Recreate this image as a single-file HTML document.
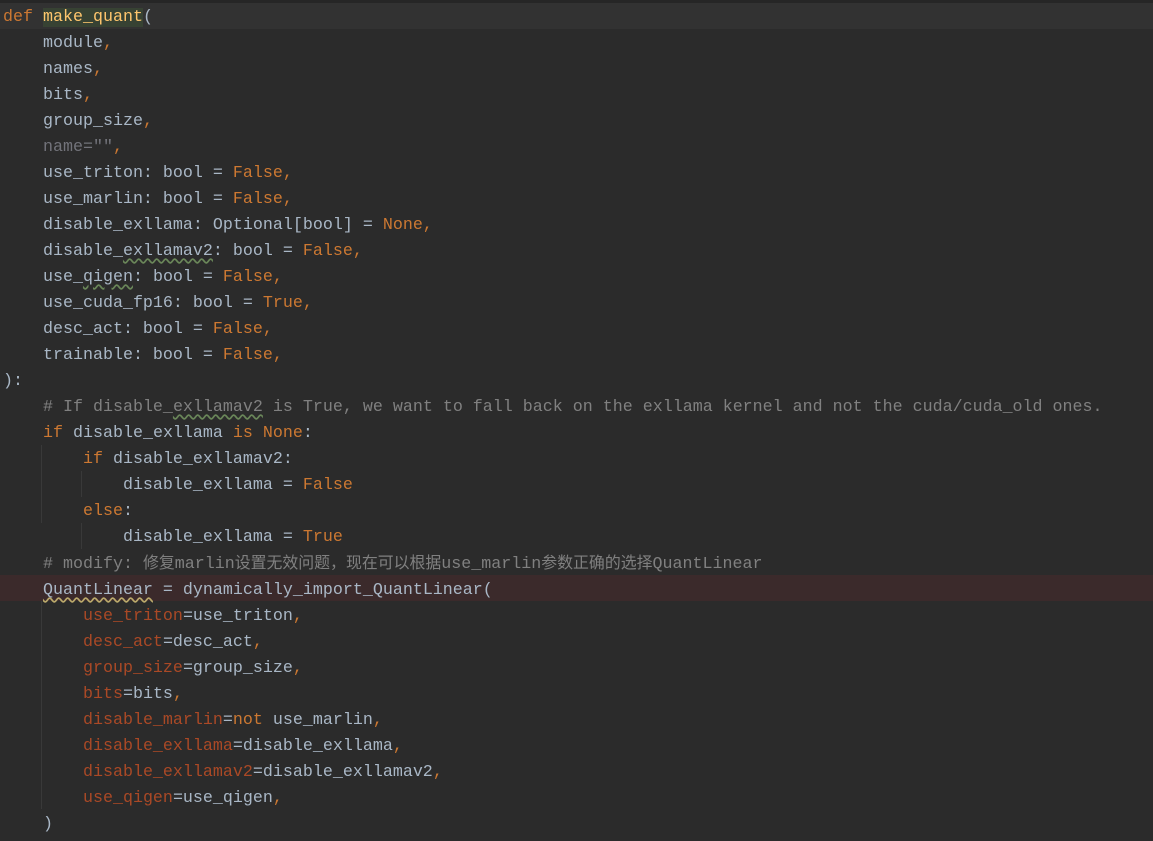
<!DOCTYPE html>
<html><head><meta charset="utf-8"><style>
body{margin:0;width:1153px;height:841px;background:#2b2b2b;overflow:hidden;position:relative}
.top{position:absolute;left:0;top:0;width:1153px;height:3px;background:#262626}
.cur{position:absolute;left:0;top:3px;width:1153px;height:26px;background:#323232}
.err{position:absolute;left:0;top:575px;width:1153px;height:26px;background:#3b2a2b}
.hl{background:#374233}
pre{position:absolute;left:3px;top:5px;margin:0;font-family:"Liberation Mono","Noto Sans CJK SC",monospace;font-size:16.67px;line-height:26px;color:#a9b7c6}
.k{color:#cc7832}.f{color:#ffc66d}.c{color:#808080}.p{color:#aa4926}.g{color:#72737a}
.z{font-size:15.9px}
.w{text-decoration:underline wavy #6a8759;text-underline-offset:3px}
.wy{text-decoration:underline wavy #bba96b;text-underline-offset:3px}
.ig{position:absolute;width:1px;background:#393939}
</style></head><body>
<div class="top"></div><div class="cur"></div><div class="err"></div>
<div class="ig" style="left:41px;top:445px;height:78px"></div>
<div class="ig" style="left:81px;top:471px;height:26px"></div>
<div class="ig" style="left:81px;top:523px;height:26px"></div>
<div class="ig" style="left:41px;top:601px;height:208px"></div>
<pre><span class="k">def</span> <span class="f hl">make_quant</span>(
    module<span class="k">,</span>
    names<span class="k">,</span>
    bits<span class="k">,</span>
    group_size<span class="k">,</span>
    <span class="g">name=""</span><span class="k">,</span>
    use_triton: bool = <span class="k">False,</span>
    use_marlin: bool = <span class="k">False,</span>
    disable_exllama: Optional[bool] = <span class="k">None,</span>
    disable_<span class="w">exllamav2</span>: bool = <span class="k">False,</span>
    use_<span class="w">qigen</span>: bool = <span class="k">False,</span>
    use_cuda_fp16: bool = <span class="k">True,</span>
    desc_act: bool = <span class="k">False,</span>
    trainable: bool = <span class="k">False,</span>
):
    <span class="c"># If disable_<span class="w">exllamav2</span> is True, we want to fall back on the exllama kernel and not the cuda/cuda_old ones.</span>
    <span class="k">if</span> disable_exllama <span class="k">is None</span>:
        <span class="k">if</span> disable_exllamav2:
            disable_exllama = <span class="k">False</span>
        <span class="k">else</span>:
            disable_exllama = <span class="k">True</span>
    <span class="c"># modify: <span class="z">修复</span>marlin<span class="z">设置无效问题，现在可以根据</span>use_marlin<span class="z">参数正确的选择</span>QuantLinear</span>
    <span class="wy">QuantLinear</span> = dynamically_import_QuantLinear(
        <span class="p">use_triton</span>=use_triton<span class="k">,</span>
        <span class="p">desc_act</span>=desc_act<span class="k">,</span>
        <span class="p">group_size</span>=group_size<span class="k">,</span>
        <span class="p">bits</span>=bits<span class="k">,</span>
        <span class="p">disable_marlin</span>=<span class="k">not</span> use_marlin<span class="k">,</span>
        <span class="p">disable_exllama</span>=disable_exllama<span class="k">,</span>
        <span class="p">disable_exllamav2</span>=disable_exllamav2<span class="k">,</span>
        <span class="p">use_qigen</span>=use_qigen<span class="k">,</span>
    )
</pre>
</body></html>
